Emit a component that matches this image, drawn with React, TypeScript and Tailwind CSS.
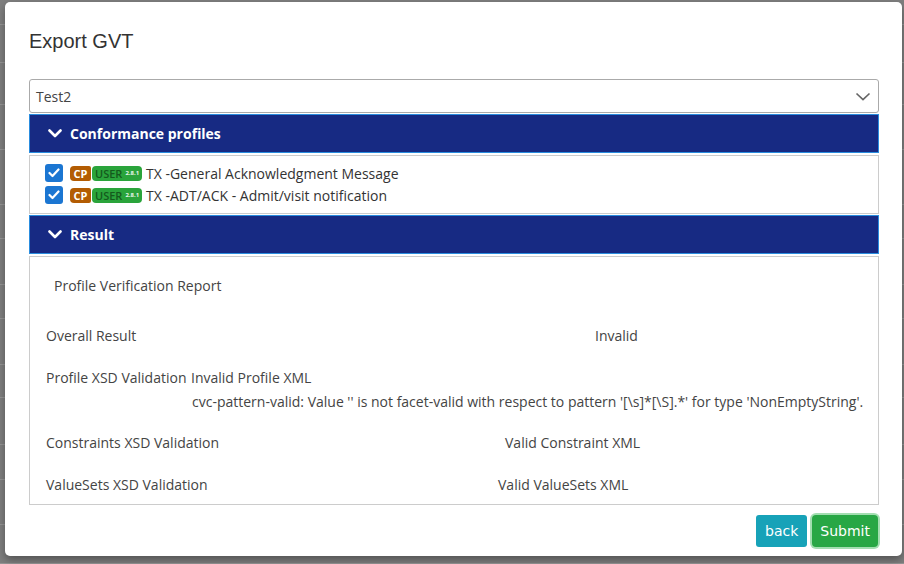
import React from 'react';

const bgRows = [25, 38, 42, 45, 55, 34, 46, 34, 46, 33, 47, 35, 45, 39];

const Chevron: React.FC<{ className?: string }> = ({ className }) => (
  <svg width="14" height="9" viewBox="0 0 14 9" className={className}>
    <polyline points="1.5,1.5 7,7 12.5,1.5" fill="none" stroke="currentColor" strokeWidth="2.6" strokeLinecap="round" strokeLinejoin="round" />
  </svg>
);

const Checkbox: React.FC = () => (
  <span className="flex h-[18px] w-[18px] items-center justify-center rounded-[3px] bg-[#1b76d2]">
    <svg width="12" height="10" viewBox="0 0 12 10">
      <polyline points="1.5,5 4.5,8 10.5,1.5" fill="none" stroke="white" strokeWidth="2.2" strokeLinecap="round" strokeLinejoin="round" />
    </svg>
  </span>
);

const ProfileRow: React.FC<{ label: string }> = ({ label }) => (
  <div className="flex h-[22px] items-center">
    <Checkbox />
    <span className="ml-[7px] flex h-[15px] w-[21px] items-center justify-center rounded-l-[4px] rounded-r-[2px] bg-[#b35c02] text-[11px] font-bold leading-none text-white">
      CP
    </span>
    <span className="ml-px flex h-[15px] w-[50px] items-center rounded-[4px] bg-[#2aa43b] pl-[3px] text-[11px] font-semibold leading-none text-[#145a1d]">
      USER
      <span className="ml-[3px] text-[6px] font-bold text-[#e8f5e9]">2.8.1</span>
    </span>
    <span className="ml-[4px] text-[14px] text-[#333]">{label}</span>
  </div>
);

const SectionHeader: React.FC<{ title: string }> = ({ title }) => (
  <div className="mt-px flex h-[39px] items-center border border-[#2a8ddf] bg-[#172a83] pl-[18px] text-white">
    <Chevron />
    <span className="ml-[8px] text-[14px] font-bold">{title}</span>
  </div>
);

export default function App() {
  return (
    <div className="relative h-[564px] w-[904px] overflow-hidden bg-[#7f7f7f] font-['Open_Sans',sans-serif]">
      <div className="flex flex-col">
        {bgRows.map((h, i) => (
          <div key={i} style={{ height: h }} className="border-b border-[#959595]" />
        ))}
      </div>

      <div className="absolute left-[5px] top-[2px] flex h-[554px] w-[897px] flex-col rounded-[5px] bg-white pl-6 pr-[23px] pt-[25px] shadow-[0_4px_8px_rgba(0,0,0,0.35)]">
        <h1 className="h-[28px] font-['Liberation_Sans',sans-serif] text-[20px] leading-[28px] text-[#333]">Export GVT</h1>

        <div className="mt-[24px] flex h-[34px] items-center justify-between rounded-[3px] border border-[#aaa] pl-[6px] pr-[6px] text-[14px] text-[#444]">
          <span>Test2</span>
          <svg width="16" height="9" viewBox="0 0 16 9" className="mr-[1px]">
            <polyline points="1.5,1.5 8,7.5 14.5,1.5" fill="none" stroke="#666" strokeWidth="1.7" />
          </svg>
        </div>

        <SectionHeader title="Conformance profiles" />
        <div className="mt-[2px] flex h-[59px] flex-col border border-[#ccc] pl-[15px] pt-[6px]">
          <ProfileRow label="TX -General Acknowledgment Message" />
          <ProfileRow label="TX -ADT/ACK - Admit/visit notification" />
        </div>

        <SectionHeader title="Result" />
        <div className="mt-[2px] flex flex-col border border-[#ccc] pb-[9px] pl-4 pt-[19px] text-[14px] leading-[20px] text-[#444]">
          <div className="pl-[8px]">Profile Verification Report</div>

          <div className="mt-[30px] flex">
            <span className="w-[549px]">Overall Result</span>
            <span>Invalid</span>
          </div>

          <div className="mt-[20px] flex leading-[24px]">
            <span className="w-[145px]">Profile XSD Validation</span>
            <div className="flex flex-col">
              <span>Invalid Profile XML</span>
              <span className="pl-[1px]">
                cvc-pattern-valid: Value '' is not facet-valid with respect to pattern '[\s]*[\S].*' for type 'NonEmptyString'.
              </span>
            </div>
          </div>

          <div className="mt-[19px] flex">
            <span className="w-[459px]">Constraints XSD Validation</span>
            <span>Valid Constraint XML</span>
          </div>

          <div className="mt-[22px] flex">
            <span className="w-[452px]">ValueSets XSD Validation</span>
            <span>Valid ValueSets XML</span>
          </div>
        </div>

        <div className="mt-[10px] flex justify-end gap-[5px] pr-px font-['DejaVu_Sans',sans-serif] text-[14px] text-white">
          <button className="h-[32px] rounded-[3px] bg-[#17a2b8] px-[9px]">back</button>
          <button className="h-[32px] rounded-[4px] bg-[#28a745] px-[8px] ring-[2px] ring-[#a3deb1]">Submit</button>
        </div>
      </div>
    </div>
  );
}
